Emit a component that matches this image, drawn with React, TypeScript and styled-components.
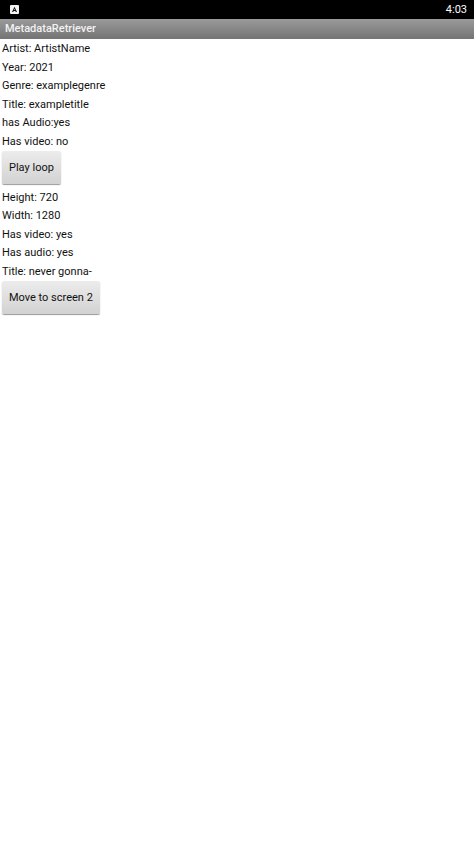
import React from "react";
import styled, { createGlobalStyle } from "styled-components";

const GlobalStyle = createGlobalStyle`
  html, body {
    margin: 0;
    padding: 0;
    height: 100%;
    background: #fff;
  }
  body {
    font-family: Roboto, "Liberation Sans", sans-serif;
  }
`;

const Screen = styled.div`
  width: 474px;
  height: 842px;
  overflow: hidden;
  background: #fff;
  color: #111;
`;

const StatusBar = styled.div`
  height: 19px;
  background: #000;
  display: flex;
  align-items: center;
  justify-content: space-between;
  padding: 0 7px 0 10px;
  color: #fff;
  font-size: 11px;
`;

const TitleBar = styled.div`
  height: 20px;
  background: linear-gradient(#9a9a9a, #747474);
  color: #f2f2f2;
  font-size: 11px;
  font-weight: 500;
  line-height: 20px;
  padding-left: 5px;
`;

const Content = styled.div`
  display: flex;
  flex-direction: column;
  align-items: flex-start;
  padding: 1px 2px 0;
`;

const Line = styled.div`
  height: 18.5px;
  line-height: 18.5px;
  font-size: 11px;
  white-space: nowrap;
`;

const Button = styled.button`
  height: 33px;
  margin: 0 0 4.6px;
  padding: 0 7px 0 7px;
  border: 0;
  border-radius: 2px;
  background: linear-gradient(#ececec, #d2d2d2);
  box-shadow: 0 1px 1px #9a9a9a;
  color: #111;
  font-family: inherit;
  font-size: 11px;
`;

function AppIcon() {
  return (
    <svg width="9" height="9" viewBox="0 0 9 9">
      <rect width="9" height="9" rx="1" fill="#f4f4f4" />
      <path d="M4.5 1.8 2 7h1.2l.5-1.1h1.6l.5 1.1H7zM4 5l.5-1.3L5 5z" fill="#111" />
    </svg>
  );
}

export default function App() {
  return (
    <Screen>
      <GlobalStyle />
      <StatusBar>
        <AppIcon />
        <span>4:03</span>
      </StatusBar>
      <TitleBar>MetadataRetriever</TitleBar>
      <Content>
        <Line>Artist: ArtistName</Line>
        <Line>Year: 2021</Line>
        <Line>Genre: examplegenre</Line>
        <Line>Title: exampletitle</Line>
        <Line>has Audio:yes</Line>
        <Line>Has video: no</Line>
        <Button>Play loop</Button>
        <Line>Height: 720</Line>
        <Line>Width: 1280</Line>
        <Line>Has video: yes</Line>
        <Line>Has audio: yes</Line>
        <Line>Title: never gonna-</Line>
        <Button>Move to screen 2</Button>
      </Content>
    </Screen>
  );
}
